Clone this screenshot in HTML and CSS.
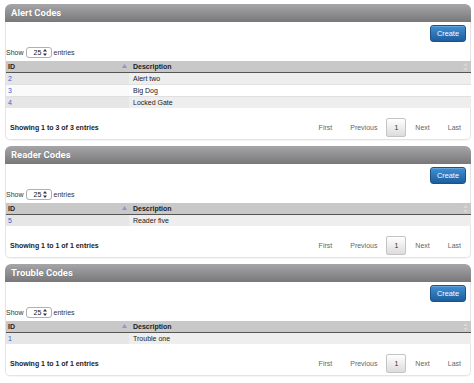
FILE: index.html
```html
<!DOCTYPE html>
<html>
<head>
<meta charset="utf-8">
<link rel="stylesheet" href="styles.css">
</head>
<body>
<div class="page">

  <section class="panel">
    <div class="panel-head">Alert Codes</div>
    <div class="panel-body">
      <div class="toolbar"><button class="btn-create">Create</button></div>
      <div class="length">Show <span class="select"><span class="select-val">25</span><svg class="select-arrows" width="4" height="7" viewBox="0 0 4 7"><path d="M2 0 L4 2.6 L0 2.6 Z M2 7 L4 4.4 L0 4.4 Z" fill="#333"/></svg></span> entries</div>
      <table class="grid">
        <thead>
          <tr><th class="col-id">ID<svg class="sort-up" width="5" height="4" viewBox="0 0 5 4"><path d="M2.5 0 L5 4 L0 4 Z" fill="#8a96d8"/></svg></th><th class="col-desc">Description<svg class="sort-both" width="5" height="8" viewBox="0 0 5 8"><path d="M2.5 0 L5 3 L0 3 Z M2.5 8 L5 5 L0 5 Z" fill="#d8d8d8"/></svg></th></tr>
        </thead>
        <tbody>
          <tr class="odd"><td class="col-id"><a href="#">2</a></td><td>Alert two</td></tr>
          <tr class="even"><td class="col-id"><a href="#">3</a></td><td>Big Dog</td></tr>
          <tr class="odd"><td class="col-id"><a href="#">4</a></td><td>Locked Gate</td></tr>
        </tbody>
      </table>
      <div class="footer">
        <div class="info">Showing 1 to 3 of 3 entries</div>
        <div class="paging"><span class="pg">First</span><span class="pg">Previous</span><span class="pg current">1</span><span class="pg">Next</span><span class="pg">Last</span></div>
      </div>
    </div>
  </section>

  <section class="panel">
    <div class="panel-head">Reader Codes</div>
    <div class="panel-body">
      <div class="toolbar"><button class="btn-create">Create</button></div>
      <div class="length">Show <span class="select"><span class="select-val">25</span><svg class="select-arrows" width="4" height="7" viewBox="0 0 4 7"><path d="M2 0 L4 2.6 L0 2.6 Z M2 7 L4 4.4 L0 4.4 Z" fill="#333"/></svg></span> entries</div>
      <table class="grid">
        <thead>
          <tr><th class="col-id">ID<svg class="sort-up" width="5" height="4" viewBox="0 0 5 4"><path d="M2.5 0 L5 4 L0 4 Z" fill="#8a96d8"/></svg></th><th class="col-desc">Description<svg class="sort-both" width="5" height="8" viewBox="0 0 5 8"><path d="M2.5 0 L5 3 L0 3 Z M2.5 8 L5 5 L0 5 Z" fill="#d8d8d8"/></svg></th></tr>
        </thead>
        <tbody>
          <tr class="odd"><td class="col-id"><a href="#">5</a></td><td>Reader five</td></tr>
        </tbody>
      </table>
      <div class="footer">
        <div class="info">Showing 1 to 1 of 1 entries</div>
        <div class="paging"><span class="pg">First</span><span class="pg">Previous</span><span class="pg current">1</span><span class="pg">Next</span><span class="pg">Last</span></div>
      </div>
    </div>
  </section>

  <section class="panel">
    <div class="panel-head">Trouble Codes</div>
    <div class="panel-body">
      <div class="toolbar"><button class="btn-create">Create</button></div>
      <div class="length">Show <span class="select"><span class="select-val">25</span><svg class="select-arrows" width="4" height="7" viewBox="0 0 4 7"><path d="M2 0 L4 2.6 L0 2.6 Z M2 7 L4 4.4 L0 4.4 Z" fill="#333"/></svg></span> entries</div>
      <table class="grid">
        <thead>
          <tr><th class="col-id">ID<svg class="sort-up" width="5" height="4" viewBox="0 0 5 4"><path d="M2.5 0 L5 4 L0 4 Z" fill="#8a96d8"/></svg></th><th class="col-desc">Description<svg class="sort-both" width="5" height="8" viewBox="0 0 5 8"><path d="M2.5 0 L5 3 L0 3 Z M2.5 8 L5 5 L0 5 Z" fill="#d8d8d8"/></svg></th></tr>
        </thead>
        <tbody>
          <tr class="odd"><td class="col-id"><a href="#">1</a></td><td>Trouble one</td></tr>
        </tbody>
      </table>
      <div class="footer">
        <div class="info">Showing 1 to 1 of 1 entries</div>
        <div class="paging"><span class="pg">First</span><span class="pg">Previous</span><span class="pg current">1</span><span class="pg">Next</span><span class="pg">Last</span></div>
      </div>
    </div>
  </section>

</div>
</body>
</html>
```

FILE: styles.css
```css
html, body {
  margin: 0;
  padding: 0;
  background: #ffffff;
}

body {
  font-family: "Liberation Sans", Arial, sans-serif;
  font-size: 7px;
  color: #222;
}

.page {
  width: 466px;
  padding: 4px 3px 0 5px;
}

.panel {
  margin-bottom: 6px;
}

.panel-head {
  height: 18px;
  line-height: 18px;
  padding-left: 6px;
  border-radius: 6px 6px 0 0;
  background: linear-gradient(#a6a6a8, #78787b);
  color: #ffffff;
  font-family: Roboto, "Liberation Sans", sans-serif;
  font-weight: bold;
  font-size: 9.5px;
  text-shadow: 0 0 1px rgba(0,0,0,0.25);
}

.panel-body {
  border: 1px solid #e4e4e4;
  border-top: none;
  border-radius: 0 0 5px 5px;
  padding: 3px 0 2px 0;
  box-shadow: 0 1px 1px rgba(0,0,0,0.04);
}

.toolbar {
  display: flex;
  justify-content: flex-end;
  padding-right: 4px;
}

.btn-create {
  width: 36px;
  height: 17px;
  padding: 0;
  border: 1px solid #1d5288;
  border-radius: 3px;
  background: linear-gradient(#3f90d4, #1c5e9c);
  color: #ffffff;
  font-family: "Liberation Sans", Arial, sans-serif;
  font-size: 7.3px;
  box-shadow: inset 0 1px 0 rgba(255,255,255,0.2);
}

.length {
  display: flex;
  align-items: center;
  gap: 2px;
  height: 11px;
  margin-top: 5px;
  color: #333;
}

.select {
  display: inline-flex;
  align-items: center;
  justify-content: space-between;
  box-sizing: border-box;
  width: 26px;
  height: 11px;
  padding: 0 4px 0 7px;
  border: 1px solid #b0b0b0;
  border-radius: 3px;
  background: #ffffff;
  color: #111;
}

.grid {
  width: 465px;
  margin-top: 3px;
  border-collapse: collapse;
  table-layout: fixed;
}

.grid th {
  height: 11px;
  padding: 0 2px;
  background: #c8c8c8;
  border-bottom: 1px solid #555;
  text-align: left;
  font-weight: bold;
  color: #222;
  position: relative;
}

.grid th.col-id {
  width: 119px;
}

.grid th.col-desc {
  padding-left: 4px;
}

.sort-up {
  position: absolute;
  right: 2px;
  top: 3px;
}

.sort-both {
  position: absolute;
  right: 3px;
  top: 2px;
}

.grid td {
  height: 11px;
  padding: 0 2px;
  border-top: 1px solid #e0e0e0;
  color: #222;
}

.grid td + td {
  padding-left: 4px;
}

.grid tr.odd td {
  background: #eeeeee;
}

.grid tr.odd td.col-id {
  background: #e6e6e6;
}

.grid tr.even td {
  background: #ffffff;
}

.grid tr.even td.col-id {
  background: #fafafa;
}

.grid a {
  color: #3a5fcd;
  text-decoration: none;
}

.footer {
  display: flex;
  align-items: center;
  justify-content: space-between;
  margin-top: 10px;
}

.info {
  padding-left: 4px;
  font-weight: bold;
  color: #222;
}

.paging {
  display: flex;
  align-items: center;
}

.pg {
  display: inline-block;
  height: 19px;
  line-height: 19px;
  padding: 0 9px;
  color: #666;
}

.pg.current {
  box-sizing: border-box;
  height: 19px;
  line-height: 17px;
  padding: 0 7px;
  border: 1px solid #c4c4c4;
  border-radius: 2px;
  background: linear-gradient(#ffffff, #dcdcdc);
  color: #333;
}
```
